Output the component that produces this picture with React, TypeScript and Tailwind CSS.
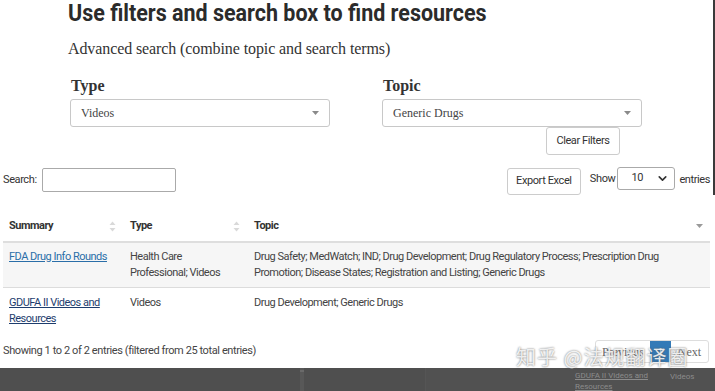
import { ChevronDown } from 'lucide-react';

const SortBoth = () => (
  <svg width="7" height="11" viewBox="0 0 7 11">
    <path d="M3.5 0.5L6.5 4H0.5z" fill="#d9d9d9" />
    <path d="M3.5 10.5L6.5 7H0.5z" fill="#d9d9d9" />
  </svg>
);

const Caret = ({ color = '#8a8a8a' }: { color?: string }) => (
  <svg width="7" height="4" viewBox="0 0 7 4">
    <path d="M0 0H7L3.5 4z" fill={color} />
  </svg>
);

const rows = [
  {
    summary: 'FDA Drug Info Rounds',
    linkClass: 'text-[#2a6ea8] whitespace-nowrap',
    type: 'Health Care Professional; Videos',
    topic:
      'Drug Safety; MedWatch; IND; Drug Development; Drug Regulatory Process; Prescription Drug Promotion; Disease States; Registration and Listing; Generic Drugs',
    striped: true,
  },
  {
    summary: 'GDUFA II Videos and Resources',
    linkClass: 'text-[#1e3d6e]',
    type: 'Videos',
    topic: 'Drug Development; Generic Drugs',
    striped: false,
  },
];

export default function App() {
  return (
    <div className="relative w-[715px] h-[391px] overflow-hidden bg-white font-['Roboto',sans-serif] text-[11px] tracking-[-0.4px] text-[#444]">
      {/* top: title, filters, controls */}
      <div className="border-r-2 border-[#3a3a3a]">
        <div className="pl-[68px]">
          <h1 className="origin-left scale-x-[0.895] text-[24px] leading-[26px] font-bold tracking-normal text-[#2b2b2b] whitespace-nowrap">
            Use filters and search box to find resources
          </h1>
          <p className="mt-[13px] font-['Liberation_Serif',serif] text-[16px] leading-[20px] tracking-[-0.1px] text-[#333]">
            Advanced search (combine topic and search terms)
          </p>
        </div>

        <div className="mt-[17px] pl-[70px] grid grid-cols-[260px_260px] gap-x-[52px] font-['Liberation_Serif',serif] tracking-normal">
          <div>
            <div className="pl-[1px] text-[16px] leading-[20px] font-bold text-[#333]">Type</div>
            <div className="mt-[3px] h-[28px] flex items-center justify-between pl-[10px] pr-[10px] border border-[#c8c8c8] rounded-[3px] text-[12px] text-[#444]">
              <span>Videos</span>
              <Caret />
            </div>
          </div>
          <div>
            <div className="pl-[1px] text-[16px] leading-[20px] font-bold text-[#333]">Topic</div>
            <div className="mt-[3px] h-[28px] flex items-center justify-between pl-[10px] pr-[10px] border border-[#c8c8c8] rounded-[3px] text-[12px] text-[#444]">
              <span>Generic Drugs</span>
              <Caret />
            </div>
            <button className="ml-[164px] h-[28px] w-[74px] border border-[#ccc] rounded-[3px] bg-white font-['Roboto',sans-serif] text-[11px] tracking-[-0.4px] text-[#333]">
              Clear Filters
            </button>
          </div>
        </div>

        <div className="mt-[12px] pl-[3px] pr-[3px] flex items-start">
          <span className="mt-[5px] leading-[16px] text-[#333]">Search:</span>
          <div className="ml-[5px] mt-[1px] h-[24px] w-[134px] border border-[#aaa] rounded-[2px]" />
          <div className="ml-auto flex items-start">
            <button className="mt-[1px] h-[27px] w-[74px] border border-[#ccc] rounded-[3px] bg-white text-[#333]">
              Export Excel
            </button>
            <span className="ml-[9px] mt-[4px] leading-[16px] text-[#333]">Show</span>
            <div className="ml-[2px] h-[23px] w-[58px] flex items-center justify-between pl-[13px] pr-[5px] border border-[#aaa] rounded-[3px] text-[#333]">
              <span>10</span>
              <ChevronDown size={13} strokeWidth={3} color="#333" />
            </div>
            <span className="ml-[4px] mt-[5px] leading-[16px] text-[#333]">entries</span>
          </div>
        </div>
      </div>

      {/* table */}
      <div className="mt-[16px] mx-[3px] w-[707px] tracking-[-0.5px]">
        <div className="grid grid-cols-[121px_124px_462px] border-b-2 border-[#dedede] font-bold text-[#333]">
          <div className="flex items-center justify-between pl-[6px] pr-[8px] py-[7px] leading-[16px]">
            <span>Summary</span>
            <SortBoth />
          </div>
          <div className="flex items-center justify-between pl-[6px] pr-[8px] py-[7px] leading-[16px]">
            <span>Type</span>
            <SortBoth />
          </div>
          <div className="flex items-center justify-between pl-[6px] pr-[7px] py-[7px] leading-[16px]">
            <span>Topic</span>
            <Caret color="#9a9a9a" />
          </div>
        </div>
        {rows.map((r) => (
          <div
            key={r.summary}
            className={`grid grid-cols-[121px_124px_462px] leading-[16px] ${
              r.striped ? 'bg-[#f6f6f6] border-b border-[#dcdcdc]' : 'bg-white'
            }`}
          >
            <div className={`pl-[6px] pr-[10px] ${r.striped ? 'py-[6px]' : 'pt-[7px] pb-[6px]'}`}>
              <a className={`underline ${r.linkClass}`}>{r.summary}</a>
            </div>
            <div className={`pl-[6px] pr-[14px] ${r.striped ? 'py-[6px]' : 'pt-[7px] pb-[6px]'}`}>{r.type}</div>
            <div className={`pl-[6px] pr-[20px] ${r.striped ? 'py-[6px]' : 'pt-[7px] pb-[6px]'}`}>{r.topic}</div>
          </div>
        ))}
      </div>

      {/* footer */}
      <div className="mt-[7px] pl-[3px] pr-[6px] flex items-center justify-between">
        <span className="text-[#444]">Showing 1 to 2 of 2 entries (filtered from 25 total entries)</span>
        <div className="flex h-[23px] border border-[#ddd] rounded-[3px] font-['Liberation_Serif',serif] text-[12px] tracking-normal text-[#666]">
          <span className="w-[54px] flex items-center justify-center">Previous</span>
          <span className="w-[21px] flex items-center justify-center bg-[#337ab7] text-white">1</span>
          <span className="w-[37px] flex items-center justify-center">Next</span>
        </div>
      </div>

      {/* dimmed strip at bottom */}
      <div className="mt-[5px] h-[30px] flex bg-[#4f4f4f]">
        <div className="w-[300px]" />
        <div className="w-[4px] bg-[#585858] flex justify-center">
          <div className="mt-[2px] w-[6px] h-[2px] bg-[#6a6a6a]" />
        </div>
        <div className="w-[121px]" />
        <div className="flex-1 border-l border-[#555] bg-[#515151] pl-[149px] pt-[2px] flex gap-[22px] text-[8px] leading-[11px] tracking-normal text-[#8c8c8c]">
          <div className="underline">
            GDUFA II Videos and
            <br />
            Resources
          </div>
          <div className="pt-[1px]">Videos</div>
        </div>
      </div>

      {/* watermark */}
      <div className="absolute left-[516px] top-[344px] font-['Noto_Sans_CJK_SC',sans-serif] text-[20px] leading-[26px] tracking-[1px] text-white/85 [text-shadow:0_0_2px_#5a5a5a]">
        知乎 @法规翻译圈
      </div>
    </div>
  );
}
